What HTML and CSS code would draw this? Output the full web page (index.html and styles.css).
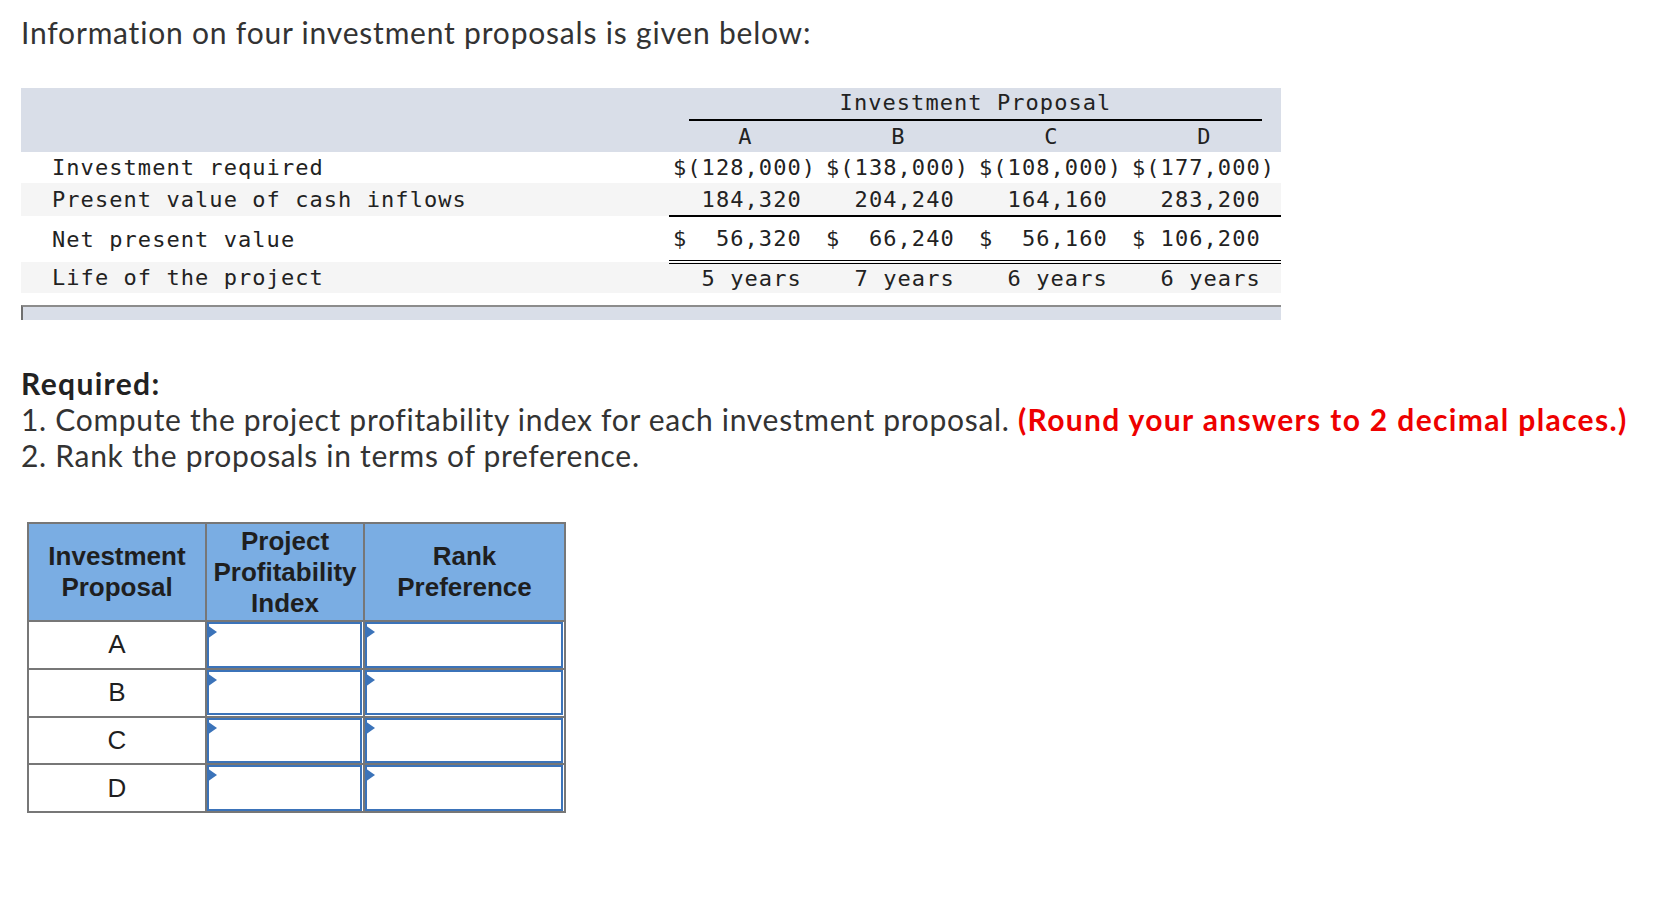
FILE: index.html
```html
<!DOCTYPE html>
<html lang="en">
<head>
<meta charset="utf-8">
<title>Investment proposals</title>
<link rel="stylesheet" href="styles.css">
</head>
<body>
<div class="page">
  <p class="intro">Information on four investment proposals is given below:</p>

  <table class="info">
    <colgroup>
      <col class="c-label"><col class="c-num"><col class="c-num"><col class="c-num"><col class="c-num">
    </colgroup>
    <thead>
      <tr class="h1">
        <th class="lbl" rowspan="2"></th>
        <th class="grp" colspan="4"><div class="grp-in">Investment Proposal</div></th>
      </tr>
      <tr class="h2">
        <th class="let">A</th><th class="let">B</th><th class="let">C</th><th class="let">D</th>
      </tr>
    </thead>
    <tbody>
      <tr class="row plain">
        <td class="lbl">Investment required</td>
        <td class="num">$(128,000)</td><td class="num">$(138,000)</td><td class="num">$(108,000)</td><td class="num">$(177,000)</td>
      </tr>
      <tr class="row shade pv">
        <td class="lbl">Present value of cash inflows</td>
        <td class="num single">  184,320 </td><td class="num single">  204,240 </td><td class="num single">  164,160 </td><td class="num single">  283,200 </td>
      </tr>
      <tr class="row plain npv">
        <td class="lbl">Net present value</td>
        <td class="num double">$  56,320 </td><td class="num double">$  66,240 </td><td class="num double">$  56,160 </td><td class="num double">$ 106,200 </td>
      </tr>
      <tr class="row shade">
        <td class="lbl">Life of the project</td>
        <td class="num">  5 years </td><td class="num">  7 years </td><td class="num">  6 years </td><td class="num">  6 years </td>
      </tr>
    </tbody>
  </table>
  <div class="scrollbar"></div>

  <div class="required">
    <p class="req-title">Required:</p>
    <p>1. Compute the project profitability index for each investment proposal. <span class="warn">(Round your answers to 2 decimal places.)</span></p>
    <p>2. Rank the proposals in terms of preference.</p>
  </div>

  <table class="answer">
    <colgroup>
      <col class="a1"><col class="a2"><col class="a3">
    </colgroup>
    <thead>
      <tr>
        <th>Investment<br>Proposal</th>
        <th>Project<br>Profitability<br>Index</th>
        <th>Rank<br>Preference</th>
      </tr>
    </thead>
    <tbody>
      <tr><td class="prop">A</td><td class="inp"><div class="box"></div></td><td class="inp"><div class="box"></div></td></tr>
      <tr><td class="prop">B</td><td class="inp"><div class="box"></div></td><td class="inp"><div class="box"></div></td></tr>
      <tr><td class="prop">C</td><td class="inp"><div class="box"></div></td><td class="inp"><div class="box"></div></td></tr>
      <tr><td class="prop">D</td><td class="inp"><div class="box"></div></td><td class="inp"><div class="box"></div></td></tr>
    </tbody>
  </table>
</div>
</body>
</html>
```

FILE: styles.css
```css
* { box-sizing: border-box; }

html, body {
  margin: 0;
  padding: 0;
  background: #ffffff;
}

.page {
  padding: 14px 0 0 21px;
  font-family: Lato, "Open Sans", sans-serif;
  color: #333333;
}

.intro {
  margin: 0;
  font-size: 30px;
  line-height: 36px;
  letter-spacing: 0.8px;
}

/* ---------- info table ---------- */
.info {
  margin-top: 38px;
  width: 1260px;
  border-collapse: collapse;
  border-spacing: 0;
  table-layout: fixed;
  font-family: "DejaVu Sans Mono", "Liberation Mono", monospace;
  font-size: 22px;
  letter-spacing: 1.06px;
  color: #222222;
}

.info .c-label { width: 648px; }
.info .c-num { width: 153px; }

.info th,
.info td {
  padding: 0;
  font-weight: normal;
  white-space: pre;
}

.info thead th { background: #d9dee8; }

.info .h1 { height: 33px; }
.info .h2 { height: 31px; }

.grp { vertical-align: bottom; }

.grp-in {
  margin: 0 19px 0 20px;
  height: 33px;
  line-height: 30px;
  border-bottom: 2px solid #000000;
  text-align: center;
}

.let {
  text-align: center;
  line-height: 31px;
}

.row { height: 31px; }
.row.pv { height: 33px; }
.row.npv { height: 46px; }

.shade td { background: #f5f5f5; }
.plain td { background: #ffffff; }

.lbl {
  padding-left: 31px !important;
  text-align: left;
}

.num {
  padding-left: 4px !important;
  text-align: left;
}

.num.single { border-bottom: 2px solid #000000; }
.num.double { border-bottom: 4px double #000000; }

.scrollbar {
  margin-top: 12px;
  width: 1260px;
  height: 15px;
  background: #d9dee8;
  border-top: 2px solid #8c8c8c;
  border-left: 2px solid #6f6f6f;
}

/* ---------- required ---------- */
.required {
  margin-top: 45px;
  font-size: 30px;
  line-height: 36px;
  letter-spacing: 0.7px;
}

.required p { margin: 0; }

.req-title {
  font-weight: bold;
  color: #222222;
  letter-spacing: 1.35px;
}

.warn {
  color: #ee0000;
  font-weight: bold;
  letter-spacing: 1.35px;
}

/* ---------- answer table ---------- */
.answer {
  margin: 49px 0 0 6px;
  width: 537px;
  border-collapse: collapse;
  table-layout: fixed;
  font-family: "Liberation Sans", Arial, sans-serif;
  color: #1f1f1f;
}

.answer .a1 { width: 178px; }
.answer .a2 { width: 158px; }
.answer .a3 { width: 201px; }

.answer th,
.answer td {
  border: 2px solid #777777;
  padding: 0;
}

.answer thead tr { height: 98px; }

.answer th {
  background: #7aade3;
  font-size: 26px;
  line-height: 31px;
  font-weight: bold;
  text-align: center;
  vertical-align: middle;
}

.answer tbody tr { height: 47.75px; }

.prop {
  text-align: center;
  font-size: 26px;
  vertical-align: middle;
}

.inp {
  padding: 0 1px 0 0 !important;
  vertical-align: top;
}

.box {
  position: relative;
  height: 45.5px;
  border: 2px solid #3b73b9;
  background: #ffffff;
}

.box::before {
  content: "";
  position: absolute;
  left: -2px;
  top: 1px;
  border-left: 10px solid #3b73b9;
  border-top: 7px solid transparent;
  border-bottom: 7px solid transparent;
}
```
